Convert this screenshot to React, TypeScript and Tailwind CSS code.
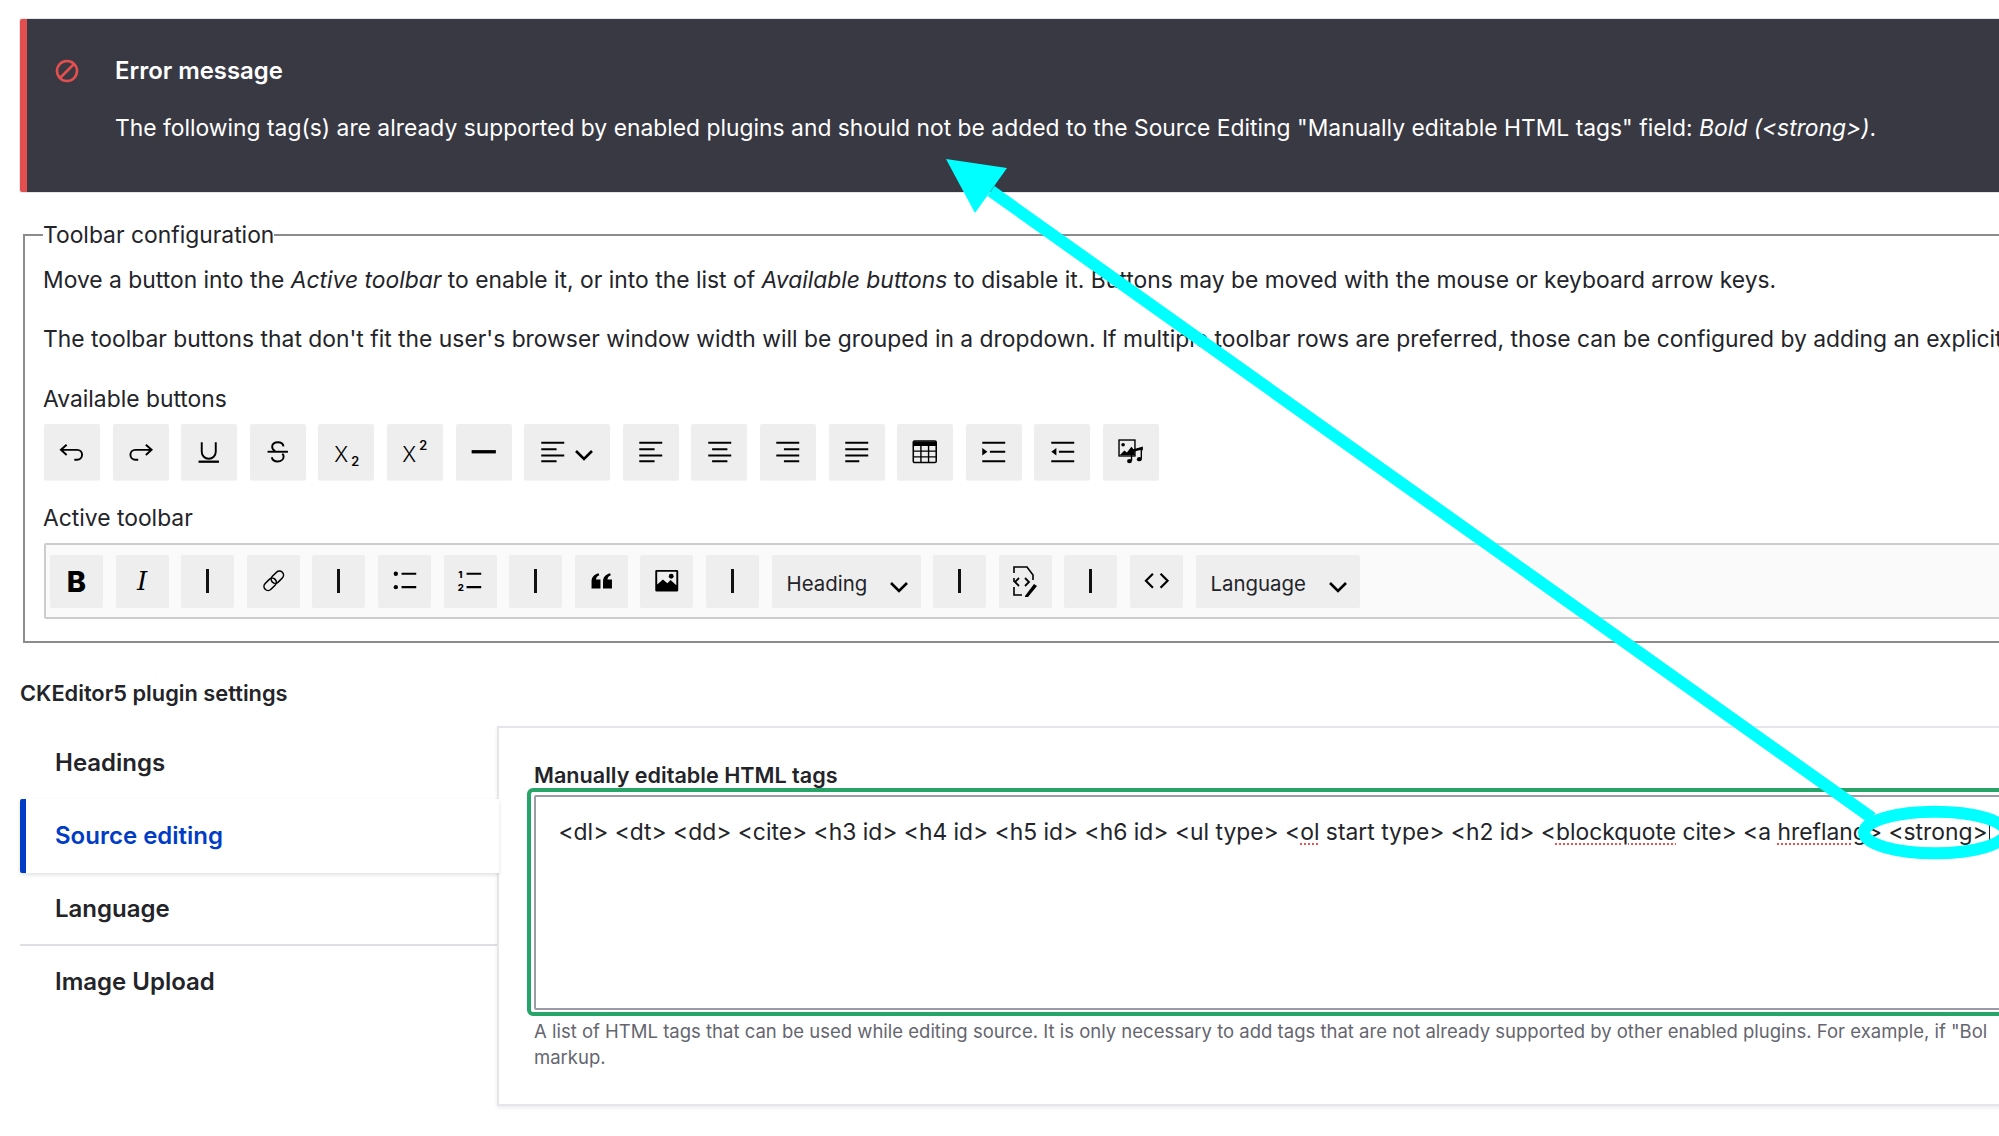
import type { ReactNode } from "react";

function Icon({ children }: { children: ReactNode }) {
  return (
    <svg viewBox="0 0 20 20" className="h-[25.5px] w-[25.5px] shrink-0 overflow-visible" fill="none" stroke="#000" strokeWidth="1.5">
      {children}
    </svg>
  );
}

function Lines({ d }: { d: string }) {
  return (
    <Icon>
      <path d={d} strokeWidth="1.6" />
    </Icon>
  );
}

function Chevron() {
  return (
    <svg viewBox="0 0 20 12" className="h-[12px] w-[20px] shrink-0" fill="none" stroke="#000" strokeWidth="2.6">
      <path d="M2 2l8 8 8-8" />
    </svg>
  );
}

const alignLeft = "M1 3h18M1 8h12M1 13h18M1 17.5h12";
const alignCenter = "M1 3h18M4 8h12M1 13h18M4 17.5h12";
const alignRight = "M1 3h18M7 8h12M1 13h18M7 17.5h12";
const alignJustify = "M1 3h18M1 8h18M1 13h18M1 17.5h11";

const inter = "Inter, sans-serif";

const availableIcons: ReactNode[] = [
  <Icon>
    <path d="M6 4.5 1.5 8.5 6 12.5M1.5 8.5H14.2a3.9 3.9 0 0 1 0 7.8H12" />
  </Icon>,
  <Icon>
    <path d="M14 4.5 18.5 8.5 14 12.5M18.5 8.5H5.8a3.9 3.9 0 0 0 0 7.8H8" />
  </Icon>,
  <Icon>
    <path d="M4.5 2.5v7.5a5.5 5.5 0 0 0 11 0V2.5" />
    <path d="M2 17.8h16" strokeWidth="1.8" />
  </Icon>,
  <Icon>
    <path d="M14.5 5.8C14.2 3.6 12.3 2.5 10 2.5S5.6 3.8 5.6 6c0 1.6.9 2.6 2.4 3.4M13.6 11.5c.7.6 1 1.4 1 2.3 0 2.3-2.1 3.8-4.6 3.8s-4.3-1.3-4.7-3.3" />
    <path d="M2 10h16" />
  </Icon>,
  <Icon>
    <text x="0.2" y="17.8" fontFamily={inter} fontSize="16.5" fontWeight="300" fill="#000" stroke="none">X</text>
    <text x="13.5" y="21" fontFamily={inter} fontSize="10" fontWeight="600" fill="#000" stroke="none">2</text>
  </Icon>,
  <Icon>
    <text x="0.2" y="17.8" fontFamily={inter} fontSize="16.5" fontWeight="300" fill="#000" stroke="none">X</text>
    <text x="13.5" y="9" fontFamily={inter} fontSize="10" fontWeight="600" fill="#000" stroke="none">2</text>
  </Icon>,
  <Icon>
    <path d="M0.5 10h19" strokeWidth="2.6" />
  </Icon>,
];

const availableIconsAfter: ReactNode[] = [
  <Lines d={alignLeft} />,
  <Lines d={alignCenter} />,
  <Lines d={alignRight} />,
  <Lines d={alignJustify} />,
  <Icon>
    <rect x="1" y="1.5" width="18" height="17" rx="1" strokeWidth="1.2" />
    <path d="M1 2h18v3.5H1z" fill="#000" stroke="none" />
    <path d="M7 5v13M13 5v13M1 9.5h18M1 14h18" strokeWidth="1.1" />
  </Icon>,
  <Icon>
    <path d="M1 3h18M7 10h12M1 17.5h18" strokeWidth="1.6" />
    <path d="M1 7l4 3-4 3z" fill="#000" stroke="none" />
  </Icon>,
  <Icon>
    <path d="M1 3h18M7 10h12M1 17.5h18" strokeWidth="1.6" />
    <path d="M5 7l-4 3 4 3z" fill="#000" stroke="none" />
  </Icon>,
  <Icon>
    <rect x="0.8" y="0.8" width="12.5" height="12.5" strokeWidth="1.1" />
    <circle cx="4" cy="4.5" r="1.4" fill="#000" stroke="none" />
    <path d="M1.5 12.5l3.5-3.5 2 1.5 3.5-4.5 2.500 3v3.500z" fill="#000" stroke="none" />
    <path d="M10.5 9.5l8-2.3V8.8" strokeWidth="2" />
    <path d="M10.6 9v8M18.3 7.5v8" strokeWidth="1.1" />
    <ellipse cx="9" cy="17.3" rx="1.9" ry="1.7" fill="#000" stroke="none" />
    <ellipse cx="16.7" cy="15.8" rx="1.9" ry="1.7" fill="#000" stroke="none" />
  </Icon>,
];

function AvailableButton({ children, wide }: { children: ReactNode; wide?: boolean }) {
  return (
    <div
      className={
        wide
          ? "flex h-[56px] w-[86px] items-center justify-center gap-[8px] rounded-[2px] bg-[#eeeeee] shadow-[0_1px_1px_rgba(0,0,0,0.05)]"
          : "flex h-[56px] w-[56px] items-center justify-center rounded-[2px] bg-[#eeeeee] shadow-[0_1px_1px_rgba(0,0,0,0.05)]"
      }
    >
      {children}
    </div>
  );
}

function ActiveButton({ children }: { children: ReactNode }) {
  return (
    <div className="flex h-[53px] w-[53px] shrink-0 items-center justify-center rounded-[2px] bg-[#eeeeee]">
      {children}
    </div>
  );
}

function Divider() {
  return (
    <ActiveButton>
      <div className="h-[24px] w-[3px] bg-[#111111]" />
    </ActiveButton>
  );
}

function Dropdown({ label, width }: { label: string; width: string }) {
  return (
    <div className={`flex h-[53px] ${width} shrink-0 items-center justify-between rounded-[2px] bg-[#eeeeee] pl-[15px] pr-[12px]`}>
      <span className="mt-[6px] text-[20.4px] leading-none text-[#232429]">{label}</span>
      <span className="mt-[11px]">
        <Chevron />
      </span>
    </div>
  );
}

function Tab({ label, active, divider }: { label: string; active?: boolean; divider?: boolean }) {
  if (active) {
    return (
      <div className="relative z-10 flex h-[74px] w-[479px] items-center rounded-l-[2px] border-l-[6px] border-[#003cc5] bg-white pl-[29px] text-[#003cc5] shadow-[0_2px_4px_rgba(0,0,0,0.12)]">
        <span className="text-[24px] font-semibold">{label}</span>
      </div>
    );
  }
  return (
    <div className={divider ? "flex h-[73px] items-center border-b-2 border-[#dedfe4] pl-[35px]" : "flex h-[72px] items-center pl-[35px]"}>
      <span className="text-[24px] font-semibold text-[#232429]">{label}</span>
    </div>
  );
}

export default function App() {
  return (
    <div className="relative h-[1136px] w-[1999px] overflow-hidden bg-white pl-[20px] pt-[19px] font-[Inter,sans-serif] text-[22.85px] text-[#232429]">
      <div className="flex h-[173px] w-[2000px] rounded-[2px] border-l-[7px] border-[#e34f4f] bg-[#393943] shadow-[0_0_0_1px_rgba(0,0,0,0.1)]">
        <div className="pl-[28px] pt-[40px]">
          <svg viewBox="0 0 24 24" className="h-[24px] w-[24px]" fill="none" stroke="#e34f4f" strokeWidth="2.6">
            <circle cx="12" cy="12" r="10" />
            <path d="M5 19 19 5" />
          </svg>
        </div>
        <div className="flex flex-col pl-[36px] pt-[38px] text-white">
          <div className="text-[23.9px] font-semibold leading-[28px]">Error message</div>
          <div className="mt-[29px] whitespace-nowrap leading-[28px]">
            The following tag(s) are already supported by enabled plugins and should not be added to the Source Editing "Manually editable HTML tags" field: <em>Bold (&lt;strong&gt;)</em>.
          </div>
        </div>
      </div>

      <fieldset className="ml-[3px] mt-[30px] w-[2100px] border-2 border-[#8c8c8c] pb-[22px] pl-[18px]">
        <legend className="leading-[26px]">Toolbar configuration</legend>
        <p className="mt-[20px] whitespace-nowrap leading-[25px]">
          Move a button into the <em>Active toolbar</em> to enable it, or into the list of <em>Available buttons</em> to disable it. Buttons may be moved with the mouse or keyboard arrow keys.
        </p>
        <p className="mt-[34px] whitespace-nowrap leading-[25px]">
          The toolbar buttons that don't fit the user's browser window width will be grouped in a dropdown. If multiple toolbar rows are preferred, those can be configured by adding an explicit
        </p>
        <div className="mt-[35px] leading-[25px]">Available buttons</div>
        <div className="ml-px mt-[12px] flex gap-[12.6px]">
          {availableIcons.map((icon, i) => (
            <AvailableButton key={i}>{icon}</AvailableButton>
          ))}
          <AvailableButton wide>
            <Lines d={alignLeft} />
            <span className="mt-[6px]">
              <Chevron />
            </span>
          </AvailableButton>
          {availableIconsAfter.map((icon, i) => (
            <AvailableButton key={i}>{icon}</AvailableButton>
          ))}
        </div>
        <div className="mt-[26px] leading-[25px]">Active toolbar</div>
        <div className="ml-px mt-[12px] flex h-[76px] items-center gap-[12.6px] rounded-[2px] border-2 border-[#cccccc] bg-[#fafafa] pl-[4px]">
          <ActiveButton>
            <span className="text-[29px] font-extrabold leading-none text-black">B</span>
          </ActiveButton>
          <ActiveButton>
            <span className="font-['DejaVu_Serif',serif] text-[26px] italic leading-none text-black">I</span>
          </ActiveButton>
          <Divider />
          <ActiveButton>
            <Icon>
              <g transform="rotate(45 10 10)" strokeWidth="1.2">
                <rect x="6.8" y="0.5" width="6.4" height="11" rx="3.2" />
                <rect x="6.8" y="8.5" width="6.4" height="11" rx="3.2" />
              </g>
            </Icon>
          </ActiveButton>
          <Divider />
          <ActiveButton>
            <Icon>
              <circle cx="3" cy="4.5" r="1.7" fill="#000" stroke="none" />
              <circle cx="3" cy="15" r="1.7" fill="#000" stroke="none" />
              <path d="M7.5 4.5h11.5M7.5 15h11.5" strokeWidth="1.7" />
            </Icon>
          </ActiveButton>
          <ActiveButton>
            <Icon>
              <text x="1" y="7.5" fontFamily={inter} fontSize="7.5" fontWeight="800" fill="#000" stroke="none">1</text>
              <text x="0.5" y="18" fontFamily={inter} fontSize="7.5" fontWeight="800" fill="#000" stroke="none">2</text>
              <path d="M7.5 4.5h11.5M7.5 15h11.5" strokeWidth="1.7" />
            </Icon>
          </ActiveButton>
          <Divider />
          <ActiveButton>
            <Icon>
              <path d="M2 16V10.5C2 7.5 4 5 7.5 4.2l.6 1.5C6.3 6.5 5.6 7.6 5.5 9H9v7zM11 16V10.5c0-3 2-5.5 5.5-6.3l.6 1.5c-1.8.8-2.5 1.9-2.6 3.3H18v7z" fill="#000" stroke="none" />
            </Icon>
          </ActiveButton>
          <ActiveButton>
            <Icon>
              <path fillRule="evenodd" d="M2 1.5h16a1 1 0 0 1 1 1v15a1 1 0 0 1-1 1H2a1 1 0 0 1-1-1v-15a1 1 0 0 1 1-1zm.5 1.5v10l4.5-4 3.5 3 2.5-2.5 4.5 4V3z" fill="#000" stroke="none" />
              <circle cx="13.5" cy="6.5" r="1.9" fill="#000" stroke="none" />
            </Icon>
          </ActiveButton>
          <Divider />
          <Dropdown label="Heading" width="w-[149px]" />
          <Divider />
          <ActiveButton>
            <svg viewBox="0 0 28 32" className="h-[32px] w-[28px]" fill="none" stroke="#000" strokeWidth="1.6">
              <path d="M3 8V2h13l6 8v5M3 13v4M3 22v8h8" />
              <path d="M8 13l-4 4 4 4M14 13l4 4-4 4" strokeWidth="1.8" />
              <path d="M14 31l9-12 3 2-9 11-3 1z" fill="#000" stroke="none" />
            </svg>
          </ActiveButton>
          <Divider />
          <ActiveButton>
            <Icon>
              <path d="M7 4.5 1.5 10 7 15.5M13 4.5 18.5 10 13 15.5" strokeWidth="1.7" />
            </Icon>
          </ActiveButton>
          <Dropdown label="Language" width="w-[164px]" />
        </div>
      </fieldset>

      <div className="mt-[36px] text-[21.8px] font-semibold leading-[28px]">CKEditor5 plugin settings</div>

      <div className="mt-[19px] flex items-start">
        <div className="mt-px w-[477px] shrink-0">
          <Tab label="Headings" />
          <Tab label="Source editing" active />
          <Tab label="Language" divider />
          <Tab label="Image Upload" />
        </div>
        <div className="h-[380px] w-[1600px] shrink-0 border-2 border-[#e5e5ea] pl-[35px] pt-[34px] shadow-[0_2px_4px_rgba(0,0,0,0.08)]">
          <div className="text-[21.6px] font-semibold leading-[26px]">Manually editable HTML tags</div>
          <div className="-ml-[7px] w-[1500px] rounded-[6px] border-4 border-[#27a568] p-[2.5px]">
            <div className="h-[215px] rounded-[2px] border-2 border-[#9b9ca5] pl-[23px] pt-[20px]">
              <div className="whitespace-nowrap text-[22.85px] leading-[30px]">
                &lt;dl&gt; &lt;dt&gt; &lt;dd&gt; &lt;cite&gt; &lt;h3 id&gt; &lt;h4 id&gt; &lt;h5 id&gt; &lt;h6 id&gt; &lt;ul type&gt; &lt;
                <span className="underline decoration-[#f0504f] decoration-dotted decoration-2 underline-offset-[4px]">ol</span> start type&gt; &lt;h2 id&gt; &lt;
                <span className="underline decoration-[#f0504f] decoration-dotted decoration-2 underline-offset-[4px]">blockquote</span> cite&gt; &lt;a{" "}
                <span className="underline decoration-[#f0504f] decoration-dotted decoration-2 underline-offset-[4px]">hreflang</span>&gt; &lt;strong&gt;
                <span className="ml-px inline-block h-[22px] w-px translate-y-[4px] bg-[#232429]" />
              </div>
            </div>
          </div>
          <div className="mt-[3px] whitespace-nowrap text-[18.5px] leading-[25.6px] text-[#65666f]">
            A list of HTML tags that can be used while editing source. It is only necessary to add tags that are not already supported by other enabled plugins. For example, if "Bol
            <br />
            markup.
          </div>
        </div>
      </div>

      <svg className="pointer-events-none absolute left-0 top-0 h-[1136px] w-[1999px]" viewBox="0 0 1999 1136" fill="none">
        <path d="M991 191 1872 818" stroke="#00ffff" strokeWidth="12" />
        <path d="M946 159 1007 168 975 213z" fill="#00ffff" />
        <ellipse cx="1935" cy="832.5" rx="71" ry="20.7" stroke="#00ffff" strokeWidth="12" />
      </svg>
    </div>
  );
}
